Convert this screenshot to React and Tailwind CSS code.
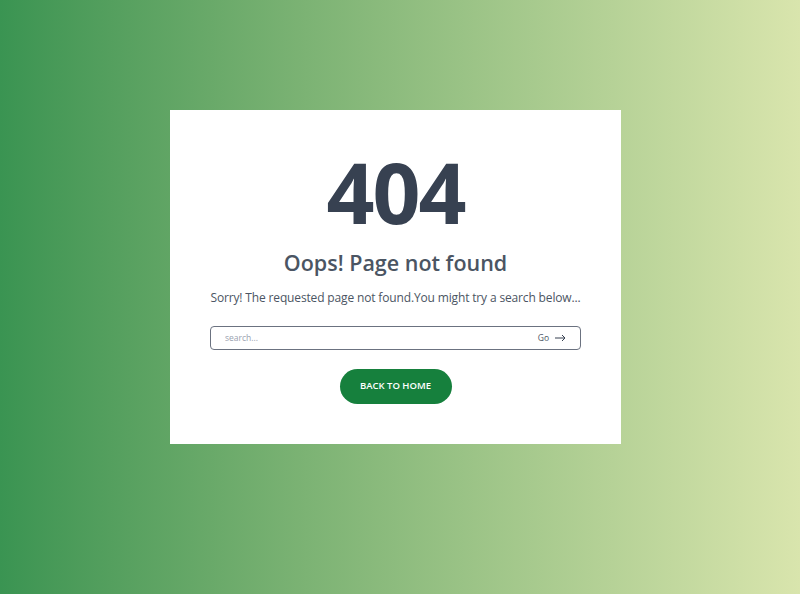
import React, { useState } from "react";

const NotFound = () => {
  const [query, setQuery] = useState("");

  return (
    <div
      className="flex h-[594px] w-full items-center justify-center bg-gradient-to-r from-[#3a9452] to-[#d9e5ad] pb-[40px] pr-[9px]"
      style={{ fontFamily: '"Open Sans", "Noto Sans", sans-serif' }}
    >
      <div className="flex h-[334px] w-[451px] flex-col items-center bg-white px-10 pt-[40px]">
        <h1 className="text-[84px] font-bold leading-none tracking-tight text-[#374151]">404</h1>
        <h2 className="mt-[16px] text-[21.5px] font-semibold leading-tight text-[#4b5563]">
          Oops! Page not found
        </h2>
        <p className="mt-[12px] whitespace-nowrap text-[12px] tracking-[-0.15px] text-[#4b5563]">
          Sorry! The requested page not found.You might try a search below...
        </p>
        <form
          className="mt-[19px] flex h-[24px] w-full items-center rounded border border-[#6b7280] pl-[14px] pr-[14px]"
          onSubmit={(e) => e.preventDefault()}
        >
          <input
            type="text"
            placeholder="search..."
            value={query}
            onChange={(e) => setQuery(e.target.value)}
            className="flex-grow bg-transparent text-[8.5px] text-gray-600 placeholder:text-gray-400 focus:outline-none"
          />
          <button type="submit" className="flex items-center gap-[6px] text-[8.5px] text-gray-600">
            Go
            <svg width="11" height="8" viewBox="0 0 11 8" fill="none" stroke="#374151" strokeWidth="1">
              <path d="M0 4h10M7 1l3 3-3 3" />
            </svg>
          </button>
        </form>
        <a
          href="#"
          className="mt-[19px] flex h-[35px] w-[112px] items-center justify-center rounded-full bg-[#16803d] text-[9.5px] font-semibold text-white"
        >
          BACK TO HOME
        </a>
      </div>
    </div>
  );
};

export default function App() {
  return <NotFound />;
}
